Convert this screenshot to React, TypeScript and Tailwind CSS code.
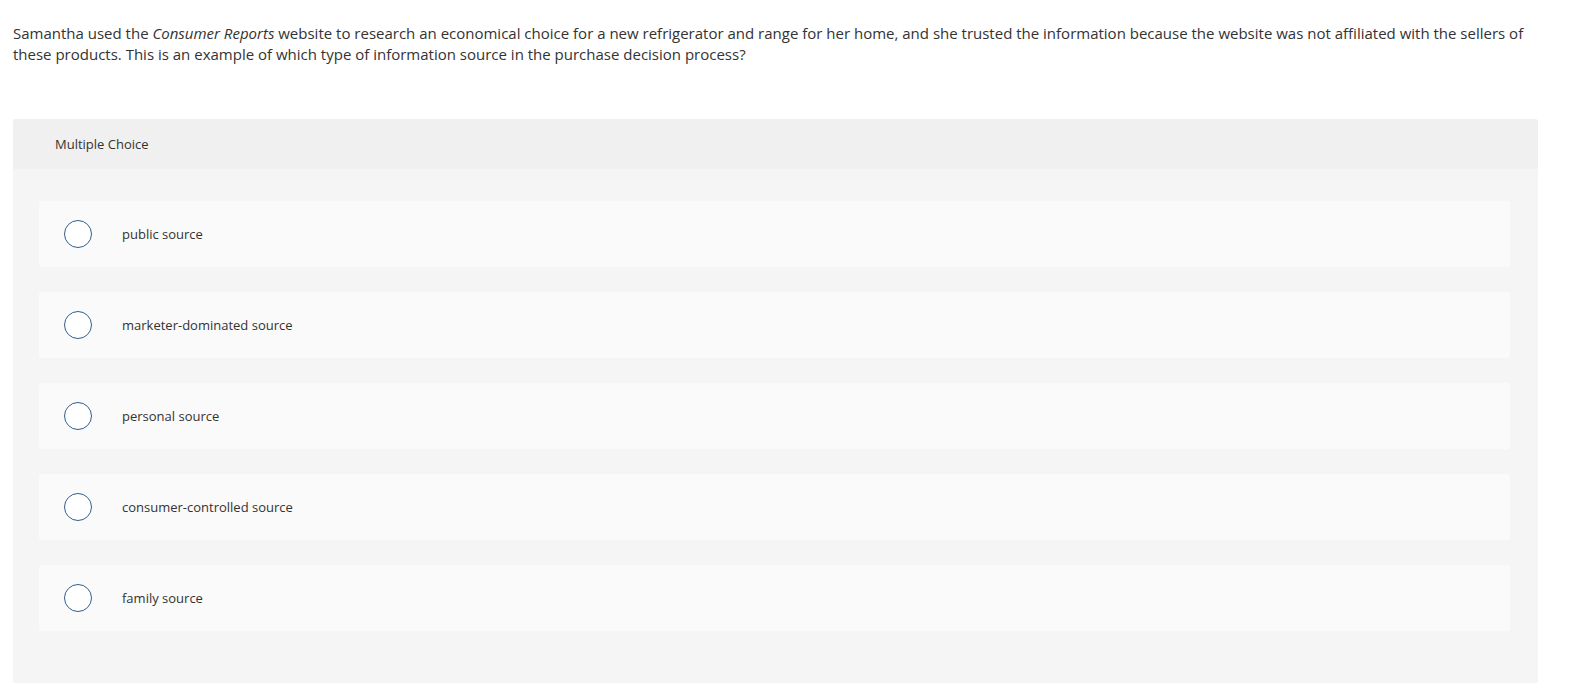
const OPTIONS = [
  "public source",
  "marketer-dominated source",
  "personal source",
  "consumer-controlled source",
  "family source",
];

export default function App() {
  return (
    <div className="min-h-screen bg-white text-[#333] font-['Open_Sans','Lato',sans-serif]">
      <div className="px-[13px] pt-[23px] pr-[30px] text-[15px] leading-[21px]">
        Samantha used the <i>Consumer Reports</i> website to research an economical choice for a new
        refrigerator and range for her home, and she trusted the information because the website was not
        affiliated with the sellers of these products. This is an example of which type of information source in
        the purchase decision process?
      </div>

      <div className="mt-[54px] ml-[13px] w-[1525px] rounded-t-[3px] overflow-hidden bg-[#f5f5f5]">
        <div className="h-[50px] bg-[#f0f0f0] flex items-center pl-[42px] text-[13px] pt-[1px]">Multiple Choice</div>
        <div className="pt-[32px] pb-[60px] px-[26px] flex flex-col gap-[25px]">
          {OPTIONS.map((o) => (
            <div key={o} className="h-[66px] w-[1471px] rounded-[3px] bg-[#fafafa] flex items-center pl-[25px]">
              <span className="w-[28px] h-[28px] rounded-full border-[1.5px] border-[#2f5f8f] bg-white shrink-0" />
              <span className="ml-[30px] text-[13px] pt-[1px]">{o}</span>
            </div>
          ))}
        </div>
      </div>
    </div>
  );
}
